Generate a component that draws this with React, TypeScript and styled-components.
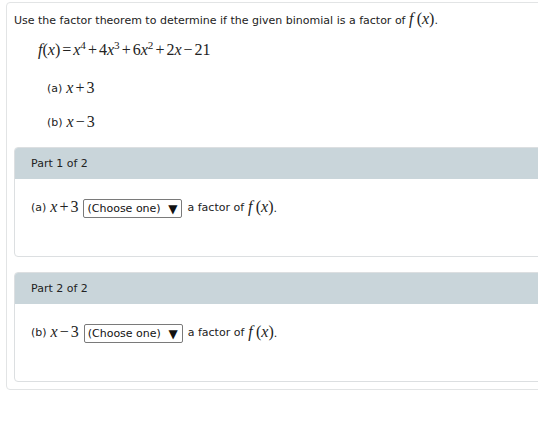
import styled, { createGlobalStyle } from "styled-components";

const Global = createGlobalStyle`
  html, body {
    margin: 0;
    padding: 0;
    background: #ffffff;
    overflow: hidden;
  }
  body {
    font-family: "DejaVu Sans", Verdana, sans-serif;
    font-size: 11px;
    color: #222222;
  }
`;

const serif = `"Liberation Serif", "Times New Roman", serif`;

const Outer = styled.div`
  margin: 2px 0 0 6px;
  width: 580px;
  border: 1px solid #e2e4e5;
  border-radius: 4px;
  padding: 0 0 7px 7px;
  box-sizing: border-box;
`;

const Line = styled.div<{ $h: number; $indent?: number }>`
  height: ${(p) => p.$h}px;
  padding-left: ${(p) => p.$indent ?? 0}px;
  display: flex;
  align-items: center;
  gap: 4px;
  white-space: nowrap;
`;

const MathText = styled.span`
  font-family: ${serif};
  font-size: 16px;
  line-height: 18px;
  color: #222222;
  white-space: nowrap;
`;

const It = styled.i`
  font-family: ${serif};
  font-style: italic;
`;

const Sup = styled.sup`
  font-size: 0.7em;
  vertical-align: 0.55em;
  line-height: 0;
`;

const Op = styled.span`
  margin: 0 2px;
`;

const Part = styled.section<{ $top: number }>`
  margin-top: ${(p) => p.$top}px;
  border: 1px solid #dcdfe1;
  border-radius: 4px;
  overflow: hidden;
`;

const PartHeader = styled.div`
  background: #c9d5da;
  height: 31px;
  padding-left: 16px;
  display: flex;
  align-items: center;
`;

const PartBody = styled.div`
  height: 77px;
  padding: 19px 0 0 16px;
  box-sizing: border-box;
`;

const Row = styled.div`
  height: 18px;
  display: flex;
  align-items: center;
  gap: 4px;
`;

const Select = styled.div`
  display: inline-flex;
  align-items: center;
  justify-content: space-between;
  height: 19px;
  width: 99px;
  box-sizing: border-box;
  border: 1px solid #7a7a7a;
  border-radius: 2px;
  padding: 1px 4px 0 3px;
  font-size: 11px;
  color: #111111;
  margin: 2px 1px 0;
`;

const Caret = styled.span`
  font-size: 12px;
`;

function Fx() {
  return (
    <MathText>
      <It>f</It>
      {"\u2009"}(<It>x</It>)
    </MathText>
  );
}

function Binomial({ sign }: { sign: string }) {
  return (
    <MathText>
      <It>x</It>
      <Op>{sign}</Op>3
    </MathText>
  );
}

function Answer({ label, sign }: { label: string; sign: string }) {
  return (
    <Row>
      <span>({label})</span>
      <Binomial sign={sign} />
      <Select>
        <span>(Choose one)</span>
        <Caret>▼</Caret>
      </Select>
      <span>a factor of</span>
      <span>
        <Fx />.
      </span>
    </Row>
  );
}

export default function App() {
  return (
    <>
      <Global />
      <Outer>
        <Line $h={32}>
          <span>
            Use the factor theorem to determine if the given binomial is a factor of&nbsp;
            <Fx />.
          </span>
        </Line>
        <Line $h={30} $indent={24}>
          <MathText>
            <It>f</It>(<It>x</It>)<Op>=</Op>
            <It>x</It>
            <Sup>4</Sup>
            <Op>+</Op>4<It>x</It>
            <Sup>3</Sup>
            <Op>+</Op>6<It>x</It>
            <Sup>2</Sup>
            <Op>+</Op>2<It>x</It>
            <Op>−</Op>21
          </MathText>
        </Line>
        <Line $h={46} $indent={33}>
          <span>(a)</span>
          <Binomial sign="+" />
        </Line>
        <Line $h={22} $indent={33}>
          <span>(b)</span>
          <Binomial sign="−" />
        </Line>
        <Part $top={14}>
          <PartHeader>Part 1 of 2</PartHeader>
          <PartBody>
            <Answer label="a" sign="+" />
          </PartBody>
        </Part>
        <Part $top={15}>
          <PartHeader>Part 2 of 2</PartHeader>
          <PartBody>
            <Answer label="b" sign="−" />
          </PartBody>
        </Part>
      </Outer>
    </>
  );
}
